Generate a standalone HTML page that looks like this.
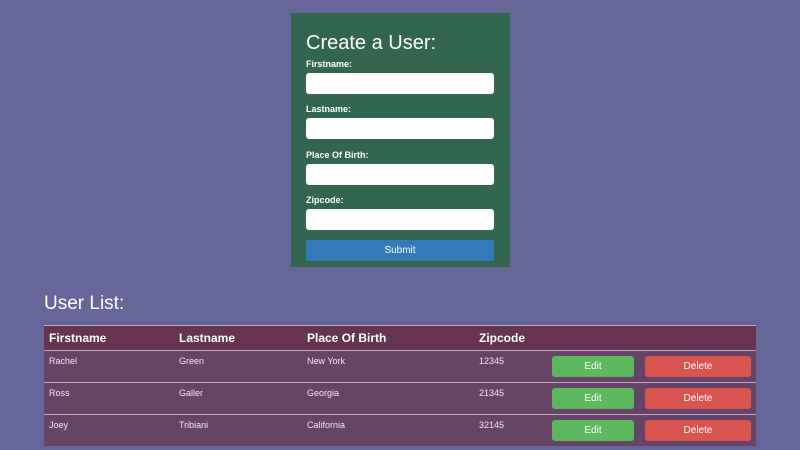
<!DOCTYPE html>
<html><head><style>
body{margin:0;width:800px;height:450px;background:#666699;font-family:"Liberation Sans",sans-serif;position:relative;overflow:hidden;color:#fff}
.box{position:absolute;left:291px;top:13px;width:219px;height:254px;background:#33664f}
.t{position:absolute;left:306px;top:32px;font-size:20px}
.l{position:absolute;left:306px;font-size:9px;font-weight:bold}
.i{position:absolute;left:306px;width:188px;height:21px;background:#fff;border-radius:3px}
.sub{position:absolute;left:306px;top:240px;width:188px;height:21px;background:#337ab7;border-radius:2px;font-size:10px;text-align:center;line-height:21px}
.h2{position:absolute;left:44px;top:293px;font-size:19px}
.row{position:absolute;left:44px;width:712px;background:#664466}
.c{position:absolute;font-size:9px;color:#f0e8f0}
.hd .c{font-size:12px;font-weight:bold;color:#fff}
.btn{position:absolute;height:21px;border-radius:3px;font-size:10px;text-align:center;line-height:21px}
.e{left:508px;width:82px;background:#5cb85c}
.d{left:601px;width:106px;background:#d9534f}
.sep{position:absolute;left:44px;width:712px;height:1px;background:#c8a8c8}
</style></head><body>
<div class="box"></div>
<div class="t">Create a User:</div>
<div class="l" style="top:59px">Firstname:</div><div class="i" style="top:73px"></div>
<div class="l" style="top:104px">Lastname:</div><div class="i" style="top:118px"></div>
<div class="l" style="top:150px">Place Of Birth:</div><div class="i" style="top:164px"></div>
<div class="l" style="top:195px">Zipcode:</div><div class="i" style="top:209px"></div>
<div class="sub">Submit</div>
<div class="h2">User List:</div>
<div class="sep" style="top:325px"></div>
<div class="row hd" style="top:326px;height:24px;background:#663350">
<div class="c" style="left:5px;top:5px">Firstname</div><div class="c" style="left:135px;top:5px">Lastname</div><div class="c" style="left:263px;top:5px">Place Of Birth</div><div class="c" style="left:435px;top:5px">Zipcode</div></div>
<div class="sep" style="top:350px"></div>
<div class="row" style="top:351px;height:31px">
<div class="c" style="left:5px;top:5px">Rachel</div><div class="c" style="left:135px;top:5px">Green</div><div class="c" style="left:263px;top:5px">New York</div><div class="c" style="left:435px;top:5px">12345</div>
<div class="btn e" style="top:5px">Edit</div><div class="btn d" style="top:5px">Delete</div></div>
<div class="sep" style="top:382px"></div>
<div class="row" style="top:383px;height:31px">
<div class="c" style="left:5px;top:5px">Ross</div><div class="c" style="left:135px;top:5px">Galler</div><div class="c" style="left:263px;top:5px">Georgia</div><div class="c" style="left:435px;top:5px">21345</div>
<div class="btn e" style="top:5px">Edit</div><div class="btn d" style="top:5px">Delete</div></div>
<div class="sep" style="top:414px"></div>
<div class="row" style="top:415px;height:31px">
<div class="c" style="left:5px;top:5px">Joey</div><div class="c" style="left:135px;top:5px">Tribiani</div><div class="c" style="left:263px;top:5px">California</div><div class="c" style="left:435px;top:5px">32145</div>
<div class="btn e" style="top:5px">Edit</div><div class="btn d" style="top:5px">Delete</div></div>
</body></html>
